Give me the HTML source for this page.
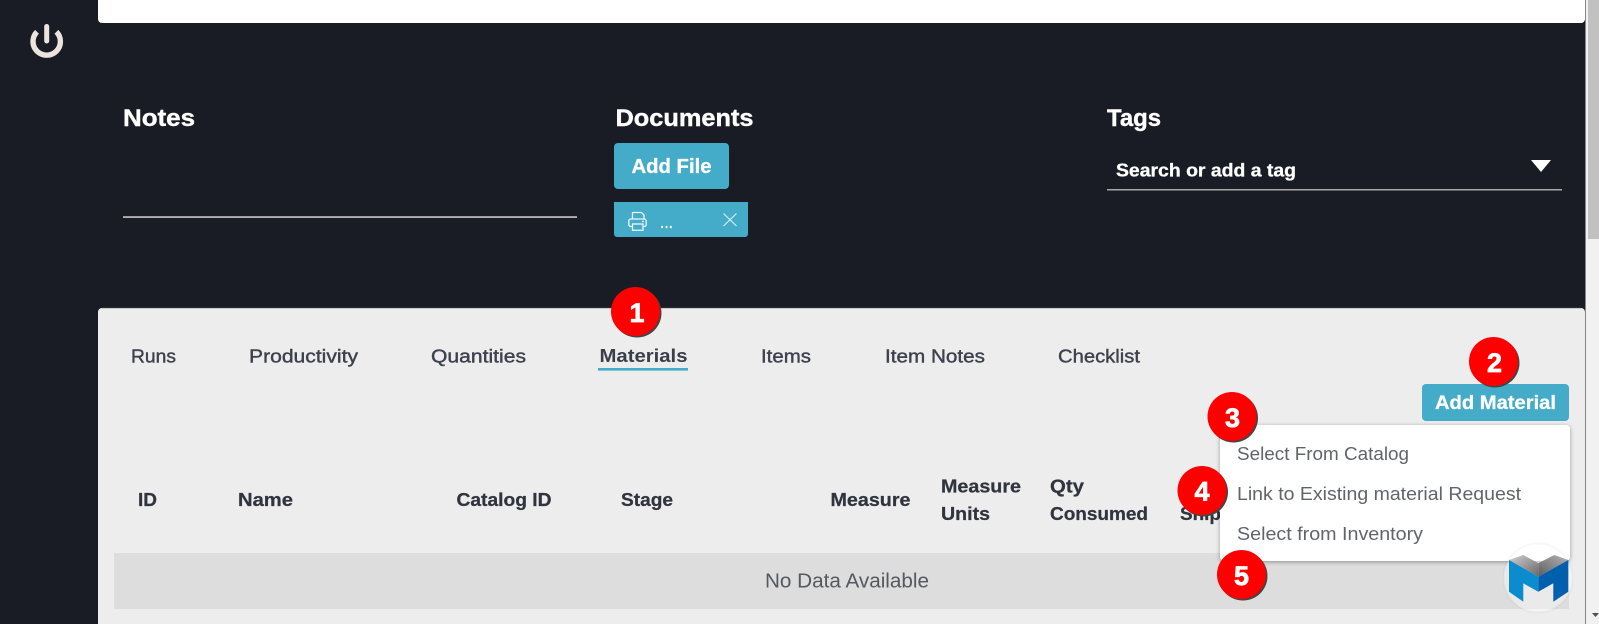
<!DOCTYPE html>
<html><head><meta charset="utf-8"><title>Materials</title>
<style>
html,body{margin:0;padding:0;width:1599px;height:624px;overflow:hidden;background:#191c24}
svg{display:block;position:absolute;left:0;top:0}
text{font-family:"Liberation Sans",Arial,sans-serif}
.h{font-size:24px;font-weight:700;fill:#fff;stroke:#fff;stroke-width:.4px}
.t{font-size:18.5px;fill:#3d414e;stroke:#3d414e;stroke-width:.4px}
.b{font-size:18.5px;font-weight:700;fill:#30343f;stroke:#30343f;stroke-width:.25px}
.d{font-size:18.5px;fill:#62646d}
.n{font-size:27px;font-weight:700;fill:#fff;stroke:#fff;stroke-width:.7px;text-anchor:middle}
.w{font-weight:700;fill:#fff;stroke:#fff;stroke-width:.3px}
</style></head>
<body>
<svg width="1599" height="624" viewBox="0 0 1599 624" xmlns="http://www.w3.org/2000/svg">
<defs>
<linearGradient id="gl" x1="0" y1="0" x2="1" y2="1"><stop offset="0" stop-color="#d0d0d0"/><stop offset="1" stop-color="#6a6a6a"/></linearGradient>
<linearGradient id="gr" x1="1" y1="0" x2="0" y2="1"><stop offset="0" stop-color="#b5b5b5"/><stop offset="1" stop-color="#5d5d5d"/></linearGradient>
</defs>
<rect width="1599" height="624" fill="#191c24"/>
<!-- scrollbar -->
<rect x="1585.5" width="13.5" height="624" fill="#f1f1f1"/>
<rect x="1588" width="11" height="239" fill="#c1c1c1"/>
<polygon points="1592,613 1599,613 1595.5,617" fill="#505050"/>
<!-- top panel -->
<path d="M98 0H1585V19a4 4 0 0 1-4 4H102a4 4 0 0 1-4-4Z" fill="#fff"/>
<!-- power -->
<path d="M37 31.8A13.7 13.7 0 1 0 56.4 31.8" fill="none" stroke="#ece5df" stroke-width="5.4" stroke-linecap="butt"/>
<path d="M46.7 26.5V41" fill="none" stroke="#ece5df" stroke-width="5" stroke-linecap="round"/>
<!-- headings -->
<text class="h" x="123" y="126" textLength="72" lengthAdjust="spacingAndGlyphs">Notes</text>
<rect x="123" y="216.3" width="454" height="1.5" fill="#d8d4d2"/>
<text class="h" x="615.5" y="126" textLength="138" lengthAdjust="spacingAndGlyphs">Documents</text>
<rect x="614" y="143" width="115" height="46" rx="4" fill="#44abc9"/>
<text class="w" x="631.5" y="173" font-size="20.5" textLength="80" lengthAdjust="spacingAndGlyphs">Add File</text>
<path d="M614 202H748V234a3 3 0 0 1-3 3H617a3 3 0 0 1-3-3Z" fill="#44abc9"/>
<g fill="none" stroke="#eef8fb" stroke-width="1.3">
<path d="M632.5 219V212.5H641.5L644 215V219"/>
<rect x="628.8" y="219" width="17.4" height="7.5" rx="2"/>
<rect x="632.5" y="224" width="10.5" height="6.3" fill="#44abc9"/>
</g>
<circle cx="643" cy="221.5" r=".9" fill="#fff"/>
<text x="660" y="228" font-size="18" fill="#fff" stroke="#fff" stroke-width=".3" textLength="13" lengthAdjust="spacingAndGlyphs">...</text>
<path d="M723.5 213.5L736.5 226M736.5 213.5L723.5 226" stroke="#d5edf4" stroke-width="1.2" fill="none"/>
<text class="h" x="1107" y="126" textLength="54" lengthAdjust="spacingAndGlyphs">Tags</text>
<text class="w" x="1116" y="176.5" font-size="18.5" textLength="180" lengthAdjust="spacingAndGlyphs">Search or add a tag</text>
<polygon points="1531,160 1551,160 1541,172" fill="#fff"/>
<rect x="1107" y="189" width="455" height="1.5" fill="#a9a9a9"/>
<!-- gray panel -->
<path d="M98 312a4 4 0 0 1 4-4H1581a4 4 0 0 1 4 4V624H98Z" fill="#ededed"/>
<path d="M102 308H1581" stroke="#55585e" stroke-width=".6" fill="none"/>
<!-- tabs -->
<text class="t" x="131" y="362.5" textLength="45" lengthAdjust="spacingAndGlyphs">Runs</text>
<text class="t" x="249" y="362.5" textLength="109" lengthAdjust="spacingAndGlyphs">Productivity</text>
<text class="t" x="431" y="362.5" textLength="95" lengthAdjust="spacingAndGlyphs">Quantities</text>
<text x="599.5" y="362" font-size="18.5" font-weight="700" fill="#3a3e4b" textLength="88" lengthAdjust="spacingAndGlyphs">Materials</text>
<rect x="598" y="368" width="90" height="2.6" fill="#44abc9"/>
<text class="t" x="761" y="362.5" textLength="50" lengthAdjust="spacingAndGlyphs">Items</text>
<text class="t" x="885" y="362.5" textLength="100" lengthAdjust="spacingAndGlyphs">Item Notes</text>
<text class="t" x="1058" y="362.5" textLength="82" lengthAdjust="spacingAndGlyphs">Checklist</text>
<!-- table header -->
<text class="b" x="138" y="506" textLength="19" lengthAdjust="spacingAndGlyphs">ID</text>
<text class="b" x="238" y="506" textLength="55" lengthAdjust="spacingAndGlyphs">Name</text>
<text class="b" x="456.5" y="506" textLength="95" lengthAdjust="spacingAndGlyphs">Catalog ID</text>
<text class="b" x="621" y="506" textLength="52" lengthAdjust="spacingAndGlyphs">Stage</text>
<text class="b" x="830.5" y="506" textLength="80" lengthAdjust="spacingAndGlyphs">Measure</text>
<text class="b" x="941" y="492.5" textLength="80" lengthAdjust="spacingAndGlyphs">Measure</text>
<text class="b" x="941" y="520" textLength="49" lengthAdjust="spacingAndGlyphs">Units</text>
<text class="b" x="1050" y="492.5" textLength="34" lengthAdjust="spacingAndGlyphs">Qty</text>
<text class="b" x="1050" y="520" textLength="98" lengthAdjust="spacingAndGlyphs">Consumed</text>
<text class="b" x="1180" y="520" textLength="41" lengthAdjust="spacingAndGlyphs">Ship</text>
<!-- band -->
<rect x="114" y="553" width="1455" height="56" fill="#dddddd"/>
<text x="765" y="587.5" font-size="20.5" fill="#565860" textLength="164" lengthAdjust="spacingAndGlyphs">No Data Available</text>
<!-- add material -->
<rect x="1422" y="384" width="147" height="37" rx="4" fill="#44abc9"/>
<text class="w" x="1435" y="409" font-size="19" textLength="121" lengthAdjust="spacingAndGlyphs">Add Material</text>
<!-- dropdown -->
<rect x="1220" y="425" width="350" height="136" rx="4" fill="#fff" style="filter:drop-shadow(0 1px 2px rgba(0,0,0,.35))"/>
<text class="d" x="1237" y="460" textLength="172" lengthAdjust="spacingAndGlyphs">Select From Catalog</text>
<text class="d" x="1237" y="500" textLength="284" lengthAdjust="spacingAndGlyphs">Link to Existing material Request</text>
<text class="d" x="1237" y="540" textLength="186" lengthAdjust="spacingAndGlyphs">Select from Inventory</text>
<!-- logo -->
<circle cx="1538" cy="578" r="34.5" fill="#fff" fill-opacity=".38" stroke="#000" stroke-opacity=".03" stroke-width="2"/>
<polygon points="1509,560 1523.3,555 1538.3,563.3 1538.3,576.7" fill="url(#gl)"/>
<polygon points="1568.3,560 1554.3,555 1538.3,563.3 1538.3,576.7" fill="url(#gr)"/>
<polygon points="1509,560 1538.3,576.7 1538.3,591.7 1523.3,583.3 1523.3,601.7 1509,591.7" fill="#0a8ccf"/>
<polygon points="1568.3,560 1538.3,576.7 1538.3,591.7 1553.3,583.3 1553.3,601.7 1568.3,591.7" fill="#0060ad"/>
<!-- callouts -->
<g fill="#444"><circle cx="637" cy="313" r="24.5"/><circle cx="1495" cy="363" r="24.5"/><circle cx="1233.5" cy="418" r="24.5"/><circle cx="1203.5" cy="492" r="24.5"/><circle cx="1243" cy="576" r="24.5"/></g>
<g fill="#fe0000"><circle cx="635.5" cy="311.5" r="24.5"/><circle cx="1493.5" cy="361.5" r="24.5"/><circle cx="1232" cy="416.5" r="24.5"/><circle cx="1202" cy="490.5" r="24.5"/><circle cx="1241.5" cy="574.5" r="24.5"/></g>
<text class="n" x="637" y="322">1</text>
<text class="n" x="1494.5" y="372">2</text>
<text class="n" x="1232.5" y="427">3</text>
<text class="n" x="1202" y="500.5">4</text>
<text class="n" x="1241.5" y="585">5</text>
</svg>
</body></html>
